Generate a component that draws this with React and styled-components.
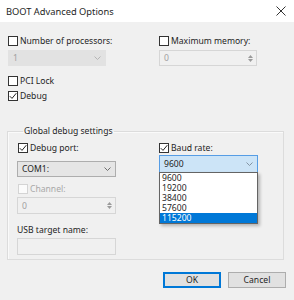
import React from 'react';
import styled, { createGlobalStyle } from 'styled-components';

const GlobalStyle = createGlobalStyle`
  html, body {
    margin: 0;
    padding: 0;
    background: #f0f0f0;
  }
  * {
    box-sizing: border-box;
  }
`;

const Dialog = styled.div`
  width: 294px;
  height: 300px;
  background: #f0f0f0;
  font-family: "Noto Sans", "Open Sans", sans-serif;
  font-size: 8.6px;
  color: #1e1e1e;
  display: flex;
  flex-direction: column;
  overflow: hidden;
`;

const TitleBar = styled.div`
  height: 22px;
  background: #ffffff;
  display: flex;
  align-items: center;
  justify-content: space-between;
  padding: 0 8px 0 6px;
  font-size: 9.3px;
`;

const Body = styled.div`
  flex: 1;
  display: flex;
  flex-direction: column;
  padding: 14px 0 0 0;
`;

const TwoCols = styled.div`
  display: grid;
  grid-template-columns: ${p => p.left}px ${p => p.right}px;
  column-gap: ${p => p.gap}px;
  padding-left: ${p => p.pad || 0}px;
`;

const Col = styled.div`
  display: flex;
  flex-direction: column;
`;

const CheckRow = styled.label`
  display: flex;
  align-items: center;
  gap: 2px;
  height: 10px;
  margin-top: ${p => p.mt || 0}px;
  padding-left: ${p => p.pl || 0}px;
  color: ${p => (p.disabled ? '#a8a8a8' : '#1e1e1e')};
  white-space: nowrap;
`;

const Box = styled.span`
  width: 10px;
  height: 10px;
  flex: none;
  border: 1px solid ${p => (p.disabled ? '#d4d4d4' : '#333333')};
  background: ${p => (p.disabled ? '#fbfbfb' : '#ffffff')};
  display: flex;
  align-items: center;
  justify-content: center;
`;

const Field = styled.div`
  position: relative;
  height: ${p => p.h || 16}px;
  margin-top: ${p => p.mt || 0}px;
  display: flex;
  align-items: center;
  justify-content: space-between;
  padding: 0 4px 0 4px;
  border: 1px solid ${p => p.border};
  background: ${p => p.bg};
  color: ${p => p.fg || '#1e1e1e'};
`;

const Spin = styled.div`
  display: flex;
  flex-direction: column;
  align-items: center;
  justify-content: center;
  gap: 1px;
  width: 8px;
  margin-right: -2px;
`;

const Label = styled.div`
  margin-top: ${p => p.mt || 0}px;
  height: 10px;
  line-height: 10px;
`;

const Group = styled.fieldset`
  margin: 24px 10px 0 7px;
  padding: 6px 0 4px 9px;
  border: 1px solid #dcdcdc;
  box-shadow: inset 1px 1px 0 #fafafa;
  min-width: 0;
`;

const Legend = styled.legend`
  padding: 0 1px;
  margin-left: 6px;
  line-height: 12px;
`;

const List = styled.div`
  position: absolute;
  left: -1px;
  right: -1px;
  top: 100%;
  background: #ffffff;
  border: 1px solid #646464;
  box-shadow: 2px 2px 3px rgba(0, 0, 0, 0.25);
  z-index: 2;
`;

const Option = styled.div`
  height: 10px;
  line-height: 10px;
  padding-left: 2px;
  background: ${p => (p.active ? '#0078d7' : 'transparent')};
  color: ${p => (p.active ? '#ffffff' : '#1e1e1e')};
`;

const Buttons = styled.div`
  display: flex;
  justify-content: flex-end;
  gap: 7px;
  padding-right: 8px;
  margin-top: 12px;
`;

const Button = styled.button`
  width: 58px;
  height: 16px;
  padding: 0;
  font: inherit;
  color: #1e1e1e;
  background: #e1e1e1;
  border: 1px solid ${p => (p.primary ? '#0078d7' : '#adadad')};
  box-shadow: ${p => (p.primary ? 'inset 0 0 0 1px #0078d7' : 'none')};
`;

const Chevron = ({ color = '#606060' }) => (
  <svg width="7" height="4" viewBox="0 0 7 4">
    <path d="M0.5 0.5 L3.5 3.5 L6.5 0.5" fill="none" stroke={color} strokeWidth="0.9" />
  </svg>
);

const Tick = () => (
  <svg width="8" height="8" viewBox="0 0 8 8">
    <path d="M0.8 4.2 L3 6.4 L7.3 1.2" fill="none" stroke="#222" strokeWidth="1" />
  </svg>
);

const Arrows = () => (
  <Spin>
    <svg width="5" height="3" viewBox="0 0 5 3"><path d="M0 3 L2.5 0 L5 3 Z" fill="#9a9a9a" /></svg>
    <svg width="5" height="3" viewBox="0 0 5 3"><path d="M0 0 L2.5 3 L5 0 Z" fill="#9a9a9a" /></svg>
  </Spin>
);

const Check = ({ label, checked, disabled, mt, pl }) => (
  <CheckRow mt={mt} pl={pl} disabled={disabled}>
    <Box disabled={disabled}>{checked && <Tick />}</Box>
    {label}
  </CheckRow>
);

const App = () => (
  <Dialog>
    <GlobalStyle />
    <TitleBar>
      <span>BOOT Advanced Options</span>
      <svg width="10" height="10" viewBox="0 0 10 10">
        <path d="M0.5 0.5 L9.5 9.5 M9.5 0.5 L0.5 9.5" stroke="#333" strokeWidth="1" />
      </svg>
    </TitleBar>
    <Body>
      <TwoCols left={98} right={98} gap={53} pad={8}>
        <Col>
          <Check label="Number of processors:" />
          <Field mt={4} h={16} border="#e2e2e2" bg="#e2e2e2" fg="#a0a0a0">
            1
            <Chevron color="#b0b0b0" />
          </Field>
        </Col>
        <Col>
          <Check label="Maximum memory:" />
          <Field mt={4} h={16} border="#d6d6d6" bg="#f0f0f0" fg="#a0a0a0">
            0
            <Arrows />
          </Field>
        </Col>
      </TwoCols>
      <Check label="PCI Lock" mt={10} pl={8} />
      <Check label="Debug" checked mt={5} pl={8} />
      <Group>
        <Legend>Global debug settings</Legend>
        <TwoCols left={99} right={99} gap={43}>
          <Col>
            <Check label="Debug port:" checked pl={1} />
            <Field mt={8} h={16} border="#adadad" bg="#e5e5e5">
              COM1:
              <Chevron />
            </Field>
            <Check label="Channel:" disabled mt={7} pl={1} />
            <Field mt={3} h={17} border="#d6d6d6" bg="#f0f0f0" fg="#a0a0a0">
              0
              <Arrows />
            </Field>
            <Label mt={11}>USB target name:</Label>
            <Field mt={3} h={17} border="#d6d6d6" bg="#f0f0f0" />
          </Col>
          <Col>
            <Check label="Baud rate:" checked />
            <Field mt={2} h={18} border="#569de5" bg="#cce4f7">
              9600
              <Chevron color="#7a8a99" />
              <List>
                <Option>9600</Option>
                <Option>19200</Option>
                <Option>38400</Option>
                <Option>57600</Option>
                <Option active>115200</Option>
              </List>
            </Field>
          </Col>
        </TwoCols>
      </Group>
      <Buttons>
        <Button primary>OK</Button>
        <Button>Cancel</Button>
      </Buttons>
    </Body>
  </Dialog>
);

export default App;
